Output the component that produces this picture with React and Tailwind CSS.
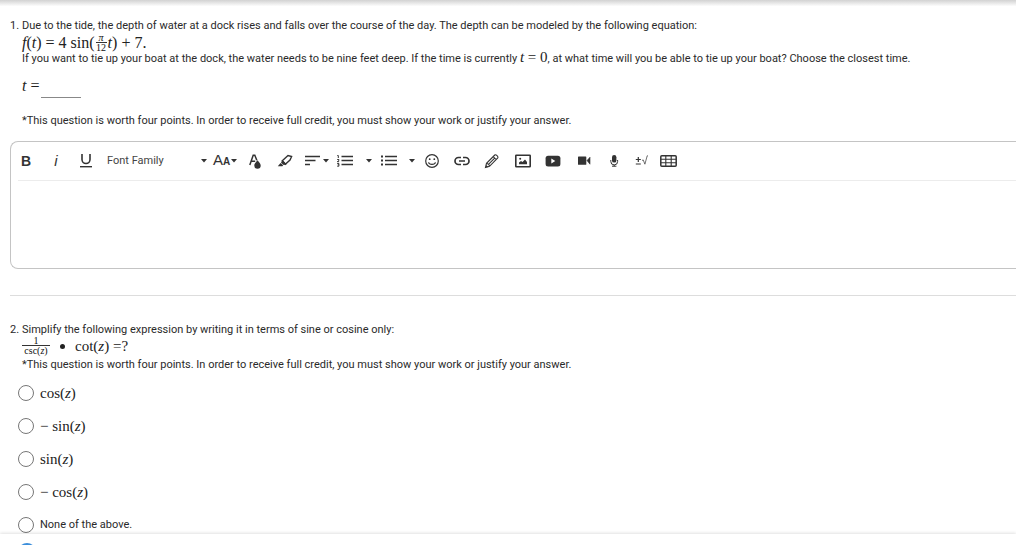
import React from "react";

const serif = "font-['Liberation_Serif',serif]";

function M({ children, className = "text-[15px] leading-4" }) {
  return <span className={`${serif} text-[#222] ${className}`}>{children}</span>;
}

function V({ children }) {
  return <i>{children}</i>;
}

function Frac({ top, bottom, className = "" }) {
  return (
    <span className={`inline-flex flex-col items-center text-center text-[10px] text-[#111] ${serif} ${className}`}>
      <span className="w-full border-b border-[#333] leading-2">{top}</span>
      <span className="pt-px leading-2">{bottom}</span>
    </span>
  );
}

function Caret() {
  return (
    <svg width="6" height="4" viewBox="0 0 6 4" className="shrink-0">
      <path d="M0 0h6L3 3.4z" fill="#333" />
    </svg>
  );
}

function Tool({ label, className = "w-[30px] justify-center", children }) {
  return (
    <button type="button" aria-label={label} title={label} className={`flex h-6 shrink-0 items-center text-[#333] ${className}`}>
      {children}
    </button>
  );
}

function Icon({ w = 16, h = 16, children }) {
  return (
    <svg width={w} height={h} viewBox={`0 0 ${w} ${h}`} fill="none" stroke="#333" strokeWidth="1.3" className="shrink-0">
      {children}
    </svg>
  );
}

function Toolbar() {
  return (
    <div role="toolbar" aria-label="Formatting" className="ml-[7px] flex h-[39px] items-center border-b border-[#ececec] pb-px">
      <Tool label="Bold" className="w-4 justify-center text-sm"><span className="font-['Liberation_Sans',sans-serif] font-bold">B</span></Tool>
      <Tool label="Italic" className="ml-[7px] w-[30px] justify-center text-[15px]"><span className="font-['Liberation_Sans',sans-serif] italic">i</span></Tool>
      <Tool label="Underline">
        <Icon w={12} h={14}>
          <path d="M2 0v5.500a4 4 0 0 0 8 0V0" strokeWidth="1.600" />
          <path d="M0 12.700h12" strokeWidth="1.400" />
        </Icon>
      </Tool>
      <div className="ml-[6px] flex w-[100px] items-center">
        <select aria-label="Font Family" className="min-w-0 flex-1 appearance-none bg-transparent text-[11px] leading-4 text-[#444]">
          <option>Font Family</option>
        </select>
        <Caret />
      </div>
      <Tool label="Font size" className="ml-[6px] w-[25px] gap-px">
        <span className="flex items-baseline font-['Liberation_Sans',sans-serif]"><span className="text-[15px]">A</span><span className="text-[10px] font-bold">A</span></span>
        <Caret />
      </Tool>
      <Tool label="Text color" className="ml-0.5 w-[30px] justify-center">
        <Icon w={12} h={16}>
          <path d="M.8 12 4.200 2.200h1.600l2 5M2.200 8.200h4" strokeWidth="1.500" />
          <path d="M8.500 7.300c1.800 2.200 3.200 3.400 3.200 5.200a3.200 3.200 0 0 1-6.400 0c0-1.800 1.400-3 3.200-5.200z" fill="#333" stroke="none" />
        </Icon>
      </Tool>
      <Tool label="Highlight">
        <Icon>
          <path d="M5.300 7.800 11 2.500 14.600 3.500 13 7 8.300 11.200z" strokeWidth="1.400" />
          <path d="M5.300 7 4 9.800l2.700 2.300 3-.8z" fill="#333" stroke="none" />
          <path d="M.8 13.300l2.700-3.300 2.700 2.300-.8 1z" fill="#333" stroke="none" />
        </Icon>
      </Tool>
      <Tool label="Align" className="ml-[5px] w-8 gap-[3px]">
        <Icon w={15} h={12}><path d="M0 1.500h15M0 5.500h10.500M0 9.500h5" strokeWidth="1.500" /></Icon>
        <Caret />
      </Tool>
      <Tool label="Numbered list" className="w-11 gap-[13px]">
        <Icon w={16} h={12}>
          <path d="M4.500 1.500H16M4.500 5.500H16M4.500 9.500H16" strokeWidth="1.600" />
          <path d="M.3.500h1v2.500M.2 4.500h1.700v1L.3 6.700h1.800M.2 8.500h1.700v2.700H.2M.7 9.800h1.200" strokeWidth="1" />
        </Icon>
        <Caret />
      </Tool>
      <Tool label="Bulleted list" className="w-9 gap-3">
        <Icon w={16} h={12}>
          <path d="M4 1.500h12M4 5.500h12M4 9.500h12" strokeWidth="1.600" />
          <path d="M0 1.500h2M0 5.500h2M0 9.500h2" strokeWidth="1.800" />
        </Icon>
        <Caret />
      </Tool>
      <Tool label="Emoji">
        <Icon>
          <circle cx="8" cy="8" r="6.300" strokeWidth="1.200" />
          <circle cx="5.700" cy="6.200" r=".9" fill="#333" stroke="none" />
          <circle cx="10.300" cy="6.200" r=".9" fill="#333" stroke="none" />
          <path d="M4.500 9.300c.7 2.700 6.300 2.700 7 0" strokeWidth="1.200" />
        </Icon>
      </Tool>
      <Tool label="Link">
        <Icon><path d="M7 4.500H4.500a3.400 3.400 0 0 0 0 7H7M9 4.500h2.500a3.400 3.400 0 0 1 0 7H9M5 8h6" strokeWidth="1.700" /></Icon>
      </Tool>
      <Tool label="Draw">
        <Icon>
          <path d="M1.500 14.500l1-4.200L10.800 2c1-1 4 1.800 3 3L5.500 13.300zM9.200 3.600l3 3M3 10.500c1.400.2 2.300 1.100 2.500 2.500M4.700 11.200l6-6M1.500 14.500l2-.5-1.400-1.500z" strokeWidth="1.100" />
        </Icon>
      </Tool>
      <Tool label="Image" className="ml-px w-[30px] justify-center">
        <Icon>
          <rect x=".8" y="2.300" width="14.400" height="11.400" rx=".5" strokeWidth="1.600" />
          <path d="M4 11.200V9.500l2-1.500 1.500 1 2.500-2.500 2 2.500v2.200z" fill="#333" stroke="none" />
          <circle cx="5.200" cy="5.800" r="1" fill="#333" stroke="none" />
        </Icon>
      </Tool>
      <Tool label="Video">
        <Icon>
          <rect x=".6" y="2.800" width="14.800" height="10.800" rx="2.500" fill="#333" stroke="none" />
          <path d="M6.300 5.500v5l4-2.500z" fill="#fff" stroke="none" />
        </Icon>
      </Tool>
      <Tool label="Record video">
        <Icon>
          <rect x="3" y="3.500" width="8.300" height="8.300" rx=".6" fill="#333" stroke="none" />
          <path d="M12 7.600l3-3.400v7z" fill="#333" stroke="#333" strokeWidth=".6" />
        </Icon>
      </Tool>
      <Tool label="Record audio">
        <Icon>
          <rect x="7" y="2" width="4.400" height="7.600" rx="2.200" fill="#333" stroke="none" />
          <path d="M5.800 7v1.500a3.400 3.400 0 0 0 6.800 0V7M9.200 12v1.300M7 13.200h4.400" strokeWidth="1" />
        </Icon>
      </Tool>
      <Tool label="Math" className="w-[26px] justify-center">
        <Icon w={13} h={12}>
          <path d="M.8 4.500h5M3.300 2v5M.8 9h5" strokeWidth="1.200" />
          <path d="M7 5.500l1.200-.6 1.700 4.300L12.200.8h.8" strokeWidth=".7" />
        </Icon>
      </Tool>
      <Tool label="Table" className="w-7 justify-center">
        <Icon w={17} h={12}>
          <rect x=".8" y=".8" width="15.400" height="10.400" rx="1" strokeWidth="1.500" />
          <path d="M1 4.300h15M1 7.700h15M5.800 1v10M11.200 1v10" strokeWidth="1.100" />
        </Icon>
      </Tool>
    </div>
  );
}

const choices = [
  { id: "cos", math: <>cos(<V>z</V>)</> },
  { id: "nsin", math: <>− sin(<V>z</V>)</> },
  { id: "sin", math: <>sin(<V>z</V>)</> },
  { id: "ncos", math: <>− cos(<V>z</V>)</> },
  { id: "none", text: "None of the above." },
];

const note = "*This question is worth four points. In order to receive full credit, you must show your work or justify your answer.";

export default function App() {
  return (
    <div className="flex h-screen flex-col bg-white font-['Roboto',sans-serif] text-[11px] leading-4 text-[#2a2a2a]">
      <div className="h-2 shrink-0 bg-linear-to-b from-[#d2d2d2] to-white to-80%" />
      <main className="min-h-0 flex-1 overflow-hidden pl-[10px]">
        <section className="pt-[10px]">
          <div className="flex">
            <span className="w-3 shrink-0">1.</span>
            <div className="min-w-0">
              <p>Due to the tide, the depth of water at a dock rises and falls over the course of the day. The depth can be modeled by the following equation:</p>
              <div className="flex h-[17px] items-center text-base leading-4">
                <span className="flex items-center gap-1">
                  <M className=""><V>f</V>(<V>t</V>)</M>
                  <M className="">=</M>
                  <M className="">4 sin(</M>
                </span>
                <Frac className="mx-px w-[11px]" top={<V>π</V>} bottom="12" />
                <span className="flex items-center gap-1">
                  <M className=""><V>t</V>)</M>
                  <M className="">+ 7.</M>
                </span>
              </div>
              <p>If you want to tie up your boat at the dock, the water needs to be nine feet deep. If the time is currently <M className="text-[15px] leading-[0]"><V>t</V> = 0</M>, at what time will you be able to tie up your boat? Choose the closest time.</p>
              <div className="mt-[11px] flex h-5">
                <label htmlFor="time" className="w-[19px]"><M className="text-base leading-4"><V>t</V> =</M></label>
                <input id="time" className="h-5 w-10 border-b border-[#888] bg-transparent outline-none" />
              </div>
              <p className="mt-[15px]">{note}</p>
            </div>
          </div>
          <div className="mt-3 h-32 rounded-l-lg border border-r-0 border-[#c4c4c4]">
            <Toolbar />
            <textarea aria-label="Answer" className="block h-[86px] w-full resize-none bg-transparent p-2 outline-none" />
          </div>
        </section>
        <section className="mt-[26px] border-t border-[#ddd] pt-[26px]">
          <div className="flex">
            <span className="w-3 shrink-0">2.</span>
            <div className="min-w-0">
              <p>Simplify the following expression by writing it in terms of sine or cosine only:</p>
              <div className="flex h-[19px] items-center pb-[3px]">
                <Frac className="w-7" top="1" bottom={<>csc(<V>z</V>)</>} />
                <span className="mx-[10px] size-[5px] rounded-full bg-[#222]" />
                <M>cot(<V>z</V>) =?</M>
              </div>
              <p>{note}</p>
            </div>
          </div>
          <fieldset className="mt-[3px] pl-2">
            {choices.map((c) => (
              <label key={c.id} className="flex h-[33px] items-center gap-[6px]">
                <input type="radio" name="simplify" value={c.id} className="size-4 appearance-none rounded-full border border-[#777] bg-white" />
                {c.math ? <M>{c.math}</M> : <span>{c.text}</span>}
              </label>
            ))}
          </fieldset>
        </section>
      </main>
      <footer className="relative h-[11px] shrink-0 overflow-hidden bg-white pt-[9px] pl-[18px] shadow-[0_-1px_3px_rgba(0,0,0,0.12)]">
        <button type="button" aria-label="Help" className="block size-[18px] rounded-full bg-[#3b8edb]" />
      </footer>
    </div>
  );
}
